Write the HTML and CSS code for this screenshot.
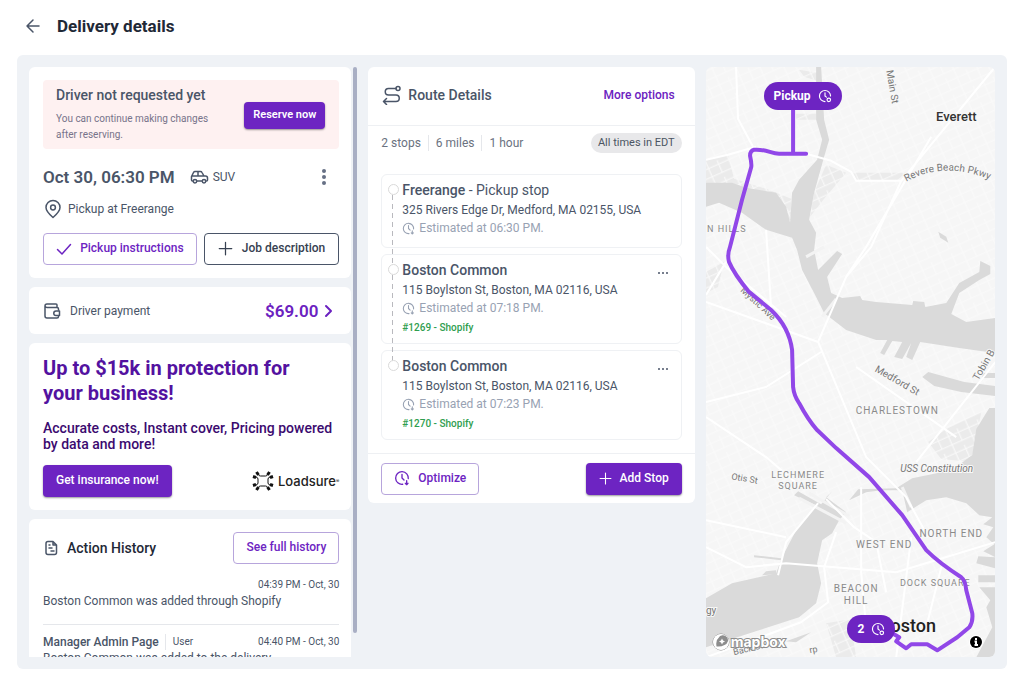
FILE: index.html
```html
<!DOCTYPE html>
<html lang="en">
<head>
    <meta charset="UTF-8">
    <meta name="viewport" content="width=device-width, initial-scale=1.0">
    <title>Delivery details</title>
    <link rel="stylesheet" href="styles.css">
</head>
<body>
    <!-- shared icons -->
    <svg class="sprite" aria-hidden="true">
        <symbol id="icon-clock" viewBox="0 0 24 24">
            <path d="M13 21.4A9.5 9.5 0 1 1 21.4 13M12 6.5V12l3 3"/>
            <path d="M19 16v6M17 20l2 2L21 20"/>
        </symbol>
        <symbol id="icon-clock-pin" viewBox="0 0 24 24">
            <path d="M12 21.5A9.5 9.5 0 1 1 21.5 12M12 6.5V12l2.5 2"/>
            <circle cx="18.5" cy="18.5" r="3"/>
        </symbol>
        <symbol id="icon-plus" viewBox="0 0 24 24">
            <path d="M12 2v20M2 12h20"/>
        </symbol>
    </svg>

    <header class="page-header">
        <a class="back" href="#" aria-label="Back">
            <svg class="icon" width="16" height="16" viewBox="0 0 16 16"><path d="M14 8H2M8 2L2 8l6 6"/></svg>
        </a>
        <h1>Delivery details</h1>
    </header>

    <main class="board">
        <div class="sidebar">
            <div class="sidebar-scroll">
                <section class="card summary">
                    <div class="alert">
                        <div>
                            <h2>Driver not requested yet</h2>
                            <p>You can continue making changes after reserving.</p>
                        </div>
                        <button class="btn btn-primary btn-small">Reserve now</button>
                    </div>
                    <div class="when">
                        <strong>Oct 30, 06:30 PM</strong>
                        <svg class="icon" width="19" height="16" viewBox="0 0 19 16">
                            <path d="M3 12H2.500Q1.500 12 1.500 11V7.500L3.500 3.500Q4 2.500 5 2.500H10.500Q11.500 2.500 12 3.500L14 7H15.500Q17.500 7 17.500 9V11Q17.500 12 16.500 12M7 12H12M2 7H14M8 2.500V7"/>
                            <circle cx="5" cy="12.200" r="1.700"/><circle cx="14" cy="12.200" r="1.700"/>
                        </svg>
                        <span>SUV</span>
                        <button class="kebab" aria-label="Delivery options">
                            <svg width="6" height="18" viewBox="0 0 6 18"><circle cx="3" cy="3" r="2"/><circle cx="3" cy="9" r="2"/><circle cx="3" cy="15" r="2"/></svg>
                        </button>
                    </div>
                    <div class="pickup-at">
                        <svg class="icon" width="20" height="20" viewBox="0 0 20 20">
                            <path d="M10 18.500C6 15 3 12 3 8.500a7 7 0 0 1 14 0c0 3.500-3 6.500-7 10z"/><circle cx="10" cy="8.500" r="2.400"/>
                        </svg>
                        <span>Pickup at Freerange</span>
                    </div>
                    <div class="actions">
                        <button class="btn btn-outline">
                            <svg class="icon" width="16" height="16" viewBox="0 0 16 16"><path d="M1.500 9.500L6 14l8.500-9.500"/></svg>
                            Pickup instructions
                        </button>
                        <button class="btn btn-dark">
                            <svg class="icon" width="15" height="15"><use href="#icon-plus"/></svg>
                            Job description
                        </button>
                    </div>
                </section>

                <section class="card payment">
                    <svg class="icon" width="18" height="18" viewBox="0 0 18 18">
                        <path d="M14 5V3Q14 2 13 2H4Q2 2 2 4V14Q2 16 4 16H14Q15.500 16 15.500 14.500M2 4Q2.500 5.500 4 5.500H14Q15.500 5.500 15.500 7V8"/>
                        <path d="M13 9H16.500V13.500H13A2.200 2.200 0 0 1 13 9z"/>
                    </svg>
                    <span>Driver payment</span>
                    <a href="#">$69.00
                        <svg class="icon" width="9" height="14" viewBox="0 0 9 14"><path d="M2 2L7 7 2 12"/></svg>
                    </a>
                </section>

                <section class="card insurance">
                    <h2>Up to $15k in protection for your business!</h2>
                    <p>Accurate costs, Instant cover, Pricing powered by data and more!</p>
                    <div class="insurance-row">
                        <button class="btn btn-primary">Get insurance now!</button>
                        <div class="loadsure">
                            <svg width="22" height="22" viewBox="0 0 22 22">
                                <path class="thick" d="M1 6.500L4 7.500M6.500 5L4.500 2M21 6.500L18 7.500M15.500 5L17.500 2M1 15.500L4 14.500M6.500 17L4.500 20M21 15.500L18 14.500M15.500 17L17.500 20"/>
                                <path class="thin" d="M6 4.500Q7 6 8.500 6H13.500Q15 6 16 4.500M6 17.500Q7 16 8.500 16H13.500Q15 16 16 17.500M4 7Q6 7.500 6 9V13Q6 14.500 4 15M18 7Q16 7.500 16 9V13Q16 14.500 18 15"/>
                            </svg>
                            <span>Loadsure</span><sup>®</sup>
                        </div>
                    </div>
                </section>

                <section class="card history">
                    <div class="history-head">
                        <svg class="icon" width="16" height="16" viewBox="0 0 16 16">
                            <path d="M10 1.500H5Q3 1.500 3 3.500V12.500Q3 14.500 5 14.500H11.500Q13.500 14.500 13.500 12.500V5zM10 1.500V5H13.500M6 8h3M8 11H11M6 5h1"/>
                        </svg>
                        <h2>Action History</h2>
                        <button class="btn btn-outline">See full history</button>
                    </div>
                    <ul>
                        <li>
                            <div class="meta"><time>04:39 PM - Oct, 30</time></div>
                            <p>Boston Common was added through Shopify</p>
                        </li>
                        <li>
                            <div class="meta"><b>Manager Admin Page</b><span class="role">User</span><time>04:40 PM - Oct, 30</time></div>
                            <p>Boston Common was added to the delivery</p>
                        </li>
                    </ul>
                </section>
            </div>
            <div class="scroll-track" aria-hidden="true"><div class="scroll-thumb"></div></div>
        </div>

        <section class="card route">
            <div class="route-head">
                <svg class="icon" width="20" height="20" viewBox="0 0 20 20">
                    <path d="M14 3.500H6.500a3.200 3.200 0 0 0 0 6.500H14a3 3 0 0 1 0 6.500H2M4.500 13.500L1.500 16.500l3 3"/><circle cx="16" cy="3.500" r="2"/>
                </svg>
                <h2>Route Details</h2>
                <a href="#">More options</a>
            </div>
            <div class="route-body">
                <div class="stats">
                    <span>2 stops</span><span>6 miles</span><span>1 hour</span>
                    <em>All times in EDT</em>
                </div>
                <ol class="stops">
                    <li>
                        <h3>Freerange <span>- Pickup stop</span></h3>
                        <p>325 Rivers Edge Dr, Medford, MA 02155, USA</p>
                        <p class="eta"><svg class="icon" width="13" height="13"><use href="#icon-clock"/></svg>Estimated at 06:30 PM.</p>
                    </li>
                    <li>
                        <h3>Boston Common</h3>
                        <p>115 Boylston St, Boston, MA 02116, USA</p>
                        <p class="eta"><svg class="icon" width="13" height="13"><use href="#icon-clock"/></svg>Estimated at 07:18 PM.</p>
                        <a href="#">#1269 - Shopify</a>
                        <button class="more" aria-label="Stop options"><svg width="12" height="4" viewBox="0 0 12 4"><circle cx="2" cy="2" r="1"/><circle cx="6" cy="2" r="1"/><circle cx="10" cy="2" r="1"/></svg></button>
                    </li>
                    <li>
                        <h3>Boston Common</h3>
                        <p>115 Boylston St, Boston, MA 02116, USA</p>
                        <p class="eta"><svg class="icon" width="13" height="13"><use href="#icon-clock"/></svg>Estimated at 07:23 PM.</p>
                        <a href="#">#1270 - Shopify</a>
                        <button class="more" aria-label="Stop options"><svg width="12" height="4" viewBox="0 0 12 4"><circle cx="2" cy="2" r="1"/><circle cx="6" cy="2" r="1"/><circle cx="10" cy="2" r="1"/></svg></button>
                    </li>
                </ol>
            </div>
            <div class="route-foot">
                <button class="btn btn-outline"><svg class="icon" width="16" height="16"><use href="#icon-clock"/></svg>Optimize</button>
                <button class="btn btn-primary"><svg class="icon" width="13" height="13"><use href="#icon-plus"/></svg>Add Stop</button>
            </div>
        </section>

        <section class="map" aria-label="Route map">
            <svg class="map-canvas" viewBox="0 0 289 590" preserveAspectRatio="xMidYMid slice">
                <defs>
                    <pattern id="streets" width="22" height="18" patternUnits="userSpaceOnUse" patternTransform="rotate(-24)">
                        <path d="M0 4H22M0 13H22M5 0V18M16 0V13"/>
                    </pattern>
                    <path id="revere" d="M200 115Q239 93 286 114"/>
                </defs>
                <rect class="land" width="289" height="590"/>
                <!-- parks and industrial ground -->
                <path class="park" d="M0 92L22 88L28 112L60 122L85 132L85 165L60 150L0 116zM93 3L111 6V14L98 10zM90 47H110V53H90zM120 98L140 106L118 132L104 150L108 126zM145 106H200L190 114H150zM0 205L18 195L12 220L0 226zM222 375L240 362L275 345L265 395L235 392zM120 556L144 552L150 590H130z"/>
                <rect width="289" height="590" fill="url(#streets)"/>
                <!-- rivers and harbor -->
                <path class="water" d="M110 0H115L118 53L123 73L118 90L108 126L103 153L110 166L108 183L112 203L131 184L136 187L121 210L125 226L136 231L154 229L156 233L170 235L206 238L207 234L218 235L219 240L240 236L253 216L273 205L274 194L284 199V207L273 213L253 226L245 247L260 255L289 251V286L253 281L214 275L206 293L200 290L205 276L196 292L188 290L196 275L186 274L178 288L174 286L181 273L170 273L140 263L118 246L108 226L96 203L91 183L86 171L60 163L36 146L13 136L0 140V116H26L40 121L70 126L80 140L84 156L86 126L93 113L111 93L116 73L110 53z"/>
                <path class="water" d="M216 310L222 305L258 315L289 319V329L255 325L228 319zM232 165L240 170L242 176L234 171zM276 306H289V311H276z"/>
                <path class="water" d="M283 341H289V590H270L286 560L280 540L284 533L273 520H289V515H272V508H289V501L270 496L272 489L289 490L277 484L288 477L280 470L287 460L277 457L286 450L273 448L260 436L240 430L220 433L201 445L196 423H175L160 425L143 433L126 424L120 430L140 445L133 453L126 466L116 473L111 496L115 516L110 536L93 550L53 563L0 580V531L26 516L70 506L76 490L90 463L110 438L88 428L92 424L115 437L126 424L143 433L152 422L190 421L206 411L246 403L266 388L270 362z"/>
                <path class="water" d="M48 488L75 491V493L48 490zM60 504L70 503V507L56 508zM80 574L105 565L90 575z"/>
                <path class="bridge" d="M93 431L140 456M103 426L143 449M196 420L205 440M100 190L118 180M130 232L116 250"/>
                <!-- main roads -->
                <path class="road" d="M0 93L22 88L50 80M100 87L125 94L145 105L150 114L195 114L289 0M195 114L165 180L140 210L112 275L160 390L200 430L222 470M30 0L32 52L48 82M0 228L20 195M0 350L60 390L95 420M0 453L80 470M0 480L40 500L80 496L190 505M112 436L80 475L72 508M210 395L289 295M120 432L148 460L170 475L180 525M115 285L60 320L0 335M112 275L0 235M0 180L20 200L80 250M140 210L160 180L225 70M60 163L65 240M150 300L250 370M155 420V505L160 560M130 465L118 500L122 535L95 555L0 590M190 505L289 475M205 470L190 590M235 500L220 560"/>
                <g class="street-names">
                    <text transform="translate(180 4) rotate(80)">Main St</text>
                    <text><textPath href="#revere">Revere Beach Pkwy</textPath></text>
                    <text class="tiny" transform="translate(34 224) rotate(43)">Mystic Ave</text>
                    <text transform="translate(168 304) rotate(30)">Medford St</text>
                    <text transform="translate(272 314) rotate(-60)">Tobin B</text>
                    <text class="tiny" transform="translate(25 412) rotate(10)">Otis St</text>
                    <text transform="translate(0 547)">gy</text>
                    <text class="tiny" transform="translate(28 588) rotate(-14)">Back St</text>
                    <text class="tiny" transform="translate(104 586) rotate(-12)">rp</text>
                    <text class="landmark" x="194" y="405">USS Constitution</text>
                </g>
                <g class="areas">
                    <text x="1" y="165">N HILLS</text>
                    <text x="191" y="347" class="wide" text-anchor="middle">CHARLESTOWN</text>
                    <text x="92" y="411" text-anchor="middle">LECHMERE</text>
                    <text x="92" y="422" text-anchor="middle">SQUARE</text>
                    <text x="178" y="481" class="wide" text-anchor="middle">WEST END</text>
                    <text x="245" y="470" class="wide" text-anchor="middle">NORTH END</text>
                    <text x="229" y="519" text-anchor="middle">DOCK SQUARE</text>
                    <text x="150" y="525" class="wide" text-anchor="middle">BEACON</text>
                    <text x="150" y="537" class="wide" text-anchor="middle">HILL</text>
                </g>
                <text class="town" x="250" y="54" text-anchor="middle">Everett</text>
                <text class="city" x="173" y="565">Boston</text>
                <path class="route-line" d="M87 34V85M100 87H73C65 87 60 82 48 83Q44 84 44 89Q46 98 45 101L36 133L24 180Q21 188 23 195Q28 207 43 225L65 243Q83 260 86 283L87 320Q88 329 93 336Q102 353 111 363L130 381L163 410L196 448L220 483Q233 496 255 510Q259 513 260 523L266 546Q267 554 263 560L251 570L231 583L221 577L205 577L200 581L190 574L193 570L186 566"/>
            </svg>
            <button class="pin pin-pickup">Pickup <svg class="icon" width="14" height="14"><use href="#icon-clock-pin"/></svg></button>
            <button class="pin pin-stop">2 <svg class="icon" width="14" height="14"><use href="#icon-clock-pin"/></svg></button>
            <a class="mapbox" href="#">
                <svg width="20" height="20" viewBox="0 0 20 20" aria-hidden="true">
                    <circle class="ring" cx="10" cy="10" r="8"/>
                    <path class="drop" d="M5.500 14.500Q4.500 8 7.500 6A5 5 0 1 1 13.500 13Q10 15 5.500 14.500z"/><path class="dot" d="M11 6.500L12 8.500L14 9.500L12 10.500L11 12.500L10 10.500L8 9.500L10 8.500z"/>
                </svg>
                <span>mapbox</span>
            </a>
            <button class="info" aria-label="Map attribution">
                <svg width="14" height="14" viewBox="0 0 14 14"><circle cx="7" cy="7" r="6"/><path d="M7 3V5M5.500 6.500H7V10M5.500 10H9"/></svg>
            </button>
        </section>
    </main>
</body>
</html>
```
FILE: styles.css
```css
* {
    box-sizing: border-box;
}
body {
    margin: 0;
    height: 100vh;
    padding: 0 17px 14px;
    display: flex;
    flex-direction: column;
    background: #fff;
    color: #4a5568;
    font-family: Roboto, "Liberation Sans", sans-serif;
    font-size: 12px;
    line-height: 16px;
}
h1, h2, h3, p, ul, ol {
    margin: 0;
    padding: 0;
}
ul, ol {
    list-style: none;
}
a {
    color: #6b21c0;
    text-decoration: none;
}
button {
    font-family: inherit;
    cursor: pointer;
}
.sprite {
    position: absolute;
    width: 0;
    height: 0;
}
.icon {
    flex: none;
    fill: none;
    stroke: currentColor;
    stroke-width: 1.5;
    stroke-linecap: round;
    stroke-linejoin: round;
}
use {
    stroke-width: 2;
}
.page-header {
    height: 55px;
    flex: none;
    display: flex;
    align-items: center;
    gap: 16px;
    padding: 0 8px 3px;
}
.page-header h1 {
    font-size: 17px;
    line-height: 24px;
    font-weight: 700;
    color: #1f2937;
}
.back {
    display: flex;
    color: #4a5568;
}
.board {
    flex: 1;
    min-height: 0;
    display: grid;
    grid-template-columns: minmax(0, 328fr) minmax(0, 326fr) minmax(0, 289fr);
    grid-template-rows: minmax(0, 1fr);
    gap: 11px;
    padding: 12px;
    background: #eff2f6;
    border-radius: 6px;
}
.card {
    background: #fff;
    border-radius: 6px;
}
.btn {
    display: flex;
    align-items: center;
    justify-content: center;
    gap: 8px;
    height: 32px;
    padding: 0 12px 2px;
    border: 1px solid transparent;
    border-radius: 4px;
    background: #fff;
    font-size: 12px;
    font-weight: 500;
    white-space: nowrap;
}
.btn-primary {
    background: #6d24c2;
    color: #fff;
    box-shadow: 0 1px 2px rgba(0,0,0,0.4);
}
.btn-outline {
    border-color: #b7a5dc;
    color: #6d24c2;
}
.btn-dark {
    border-color: #4a5568;
    color: #374151;
}
.btn-small {
    height: 27px;
    padding: 0 8px 2px;
    font-size: 11px;
    font-weight: 600;
}

/* left column */
.sidebar {
    display: flex;
    gap: 2px;
}
.sidebar-scroll {
    flex: 1;
    min-width: 0;
    overflow-y: auto;
    scrollbar-width: none;
    display: flex;
    flex-direction: column;
    gap: 9px;
}
.sidebar-scroll .card {
    flex: none;
    padding: 13px 12px 13px 14px;
}
.scroll-track {
    width: 4px;
}
.scroll-thumb {
    height: 96%;
    border-radius: 2px;
    background: #a9afc4;
}
.alert {
    display: flex;
    align-items: center;
    justify-content: space-between;
    gap: 12px;
    padding: 7px 14px 6px 13px;
    background: #fef1f1;
    border-radius: 4px;
}
.alert h2 {
    font-size: 14px;
    font-weight: 500;
    margin-bottom: 8px;
}
.alert p {
    font-size: 10px;
    color: #77738a;
}
.alert > div {
    max-width: 172px;
}
.when {
    display: flex;
    align-items: center;
    gap: 4px;
    margin-top: 16px;
    height: 24px;
}
.when strong {
    font-size: 17px;
    font-weight: 600;
    margin-right: 11px;
}
.kebab {
    display: flex;
    margin-left: auto;
    padding: 0 12px;
    border: 0;
    background: none;
    fill: #667085;
}
.pickup-at {
    display: flex;
    align-items: center;
    gap: 5px;
    margin: 10px 0 14px;
    height: 20px;
}
.actions {
    display: flex;
    gap: 7px;
}
.actions .btn-outline {
    flex: 155;
}
.actions .btn-dark {
    flex: 133;
    gap: 9px;
}
.payment {
    display: flex;
    align-items: center;
    gap: 9px;
    height: 47px;
}
.payment a {
    display: flex;
    align-items: center;
    gap: 6px;
    margin-left: auto;
    padding-right: 6px;
    font-size: 17px;
    font-weight: 600;
}
.payment a .icon {
    stroke-width: 2;
}
.insurance h2 {
    padding-right: 20px;
    font-size: 20px;
    line-height: 25px;
    font-weight: 700;
    color: #5312a0;
}
.insurance p {
    margin: 14px 0 13px;
    font-size: 14px;
    font-weight: 500;
    color: #3b0a6f;
}
.insurance-row {
    display: flex;
    align-items: center;
    justify-content: space-between;
}
.loadsure {
    display: flex;
    align-items: center;
    color: #222;
    font-family: Inter, sans-serif;
    font-size: 13px;
    font-weight: 500;
}
.loadsure svg {
    margin-right: 4px;
    fill: none;
    stroke: #111;
}
.loadsure .thick {
    stroke-width: 3;
}
.loadsure .thin {
    stroke-width: 1;
}
.loadsure sup {
    font-size: 5px;
}
.history-head {
    display: flex;
    align-items: center;
    gap: 8px;
    margin-bottom: 13px;
}
.history-head h2 {
    font-size: 14px;
    font-weight: 500;
    color: #1f2937;
}
.history-head .btn {
    margin-left: auto;
}
.history li {
    padding-bottom: 15px;
}
.history li + li {
    border-top: 1px solid #e5e7eb;
    padding-top: 9px;
}
.history .meta {
    display: flex;
}
.history .meta b {
    font-weight: 500;
}
.history .role {
    margin-left: 6px;
    padding-left: 7px;
    border-left: 1px solid #e5e7eb;
    font-size: 10px;
}
.history time {
    margin-left: auto;
    font-size: 10px;
}

/* middle column */
.route {
    align-self: start;
}
.route-head {
    display: flex;
    align-items: center;
    gap: 6px;
    height: 59px;
    padding: 0 20px 2px 14px;
    border-bottom: 1px solid #eef0f3;
}
.route-head h2 {
    font-size: 14px;
    font-weight: 500;
}
.route-head a {
    margin-left: auto;
    font-weight: 500;
}
.route-body {
    padding: 7px 13px 13px;
}
.stats {
    display: flex;
    align-items: center;
    height: 20px;
    margin-bottom: 21px;
    color: #6b7280;
}
.stats span + span {
    margin-left: 7px;
    padding-left: 7px;
    border-left: 1px solid #e5e7eb;
}
.stats em {
    margin-left: auto;
    padding: 2px 7px;
    border-radius: 10px;
    background: #e8e8ea;
    color: #4b5563;
    font-size: 11px;
    font-style: normal;
}
.stops {
    display: flex;
    flex-direction: column;
    gap: 6px;
}
.stops li {
    position: relative;
    padding: 6px 20px 7px 20px;
    border: 1px solid #eff1f4;
    border-radius: 6px;
}
.stops li:first-child {
    padding-bottom: 10px;
}
.stops li::before {
    content: "";
    position: absolute;
    z-index: 1;
    left: 6px;
    top: 9px;
    width: 9px;
    height: 9px;
    border: 1px solid #dadada;
    border-radius: 50%;
    background: #fff;
}
.stops li:not(:last-child)::after {
    content: "";
    position: absolute;
    z-index: 1;
    left: 10px;
    top: 20px;
    bottom: -18px;
    width: 1px;
    background: repeating-linear-gradient(#b9b9be 0 5px, transparent 5px 9px);
}
.stops h3 {
    font-size: 14px;
    line-height: 19px;
    font-weight: 500;
}
.stops h3 span {
    font-weight: 400;
}
.stops p {
    line-height: 18px;
}
.stops h3 + p {
    padding-top: 1px;
}
.stops .eta {
    display: flex;
    align-items: center;
    gap: 4px;
    color: #98a2b3;
}
.stops a {
    display: block;
    margin-top: 3px;
    line-height: 16px;
    font-size: 10px;
    font-weight: 500;
    color: #2f9e4f;
}
.stops .more {
    position: absolute;
    right: 12px;
    top: 16px;
    display: flex;
    padding: 0;
    border: 0;
    background: none;
    fill: #4a5568;
}
.route-foot {
    display: flex;
    justify-content: space-between;
    padding: 9px 13px 8px;
    border-top: 1px solid #eef0f3;
}

/* map */
.map {
    position: relative;
    overflow: hidden;
    border-radius: 6px;
}
.map-canvas {
    display: block;
    width: 100%;
    height: 100%;
}
.land {
    fill: #f6f6f6;
}
.park {
    fill: #ebebeb;
}
.water {
    fill: #dadada;
}
#streets path {
    fill: none;
    stroke: #fafafa;
}
.road, .bridge {
    fill: none;
    stroke: #fff;
    stroke-width: 2;
    stroke-linejoin: round;
}
.bridge {
    stroke: #f3f3f3;
    stroke-width: 3;
}
.route-line {
    fill: none;
    stroke: #9147e8;
    stroke-width: 4;
    stroke-linecap: round;
    stroke-linejoin: round;
}
.map-canvas text {
    paint-order: stroke;
    stroke: #f8f8f8;
    stroke-width: 2;
}
.street-names {
    font-size: 10px;
    fill: #777;
}
.street-names .tiny {
    font-size: 9px;
}
.landmark {
    font-style: italic;
}
.areas {
    font-size: 9px;
    letter-spacing: 1px;
    fill: #8a8a8a;
}
.areas .wide {
    font-size: 10px;
}
.town {
    font-size: 13px;
    font-weight: 500;
    fill: #333;
}
.city {
    font-size: 18px;
    font-weight: 500;
    fill: #222;
}
.pin {
    position: absolute;
    display: flex;
    align-items: center;
    gap: 7px;
    height: 28px;
    padding: 0 10px;
    border: 0;
    border-radius: 14px;
    background: #6d24c2;
    color: #fff;
    font-size: 12px;
    font-weight: 700;
}
.pin-pickup {
    left: 20%;
    top: 15px;
}
.pin-stop {
    left: 49%;
    bottom: 14px;
}
.mapbox {
    position: absolute;
    left: 5px;
    bottom: 5px;
    display: flex;
    align-items: center;
    color: #fff;
    font-family: Inter, sans-serif;
    font-size: 14px;
    font-weight: 700;
    -webkit-text-stroke: 2px #8d8d8d;
    paint-order: stroke;
}
.mapbox .ring {
    fill: #fff;
    stroke: #8d8d8d;
    stroke-width: 1;
}
.mapbox .drop {
    fill: #8d8d8d;
}
.mapbox .dot {
    fill: #fff;
}
.info {
    position: absolute;
    right: 12px;
    bottom: 8px;
    display: flex;
    padding: 0;
    border: 0;
    border-radius: 50%;
    background: #fff;
}
.info path {
    fill: none;
    stroke: #fff;
    stroke-width: 2;
}
```
